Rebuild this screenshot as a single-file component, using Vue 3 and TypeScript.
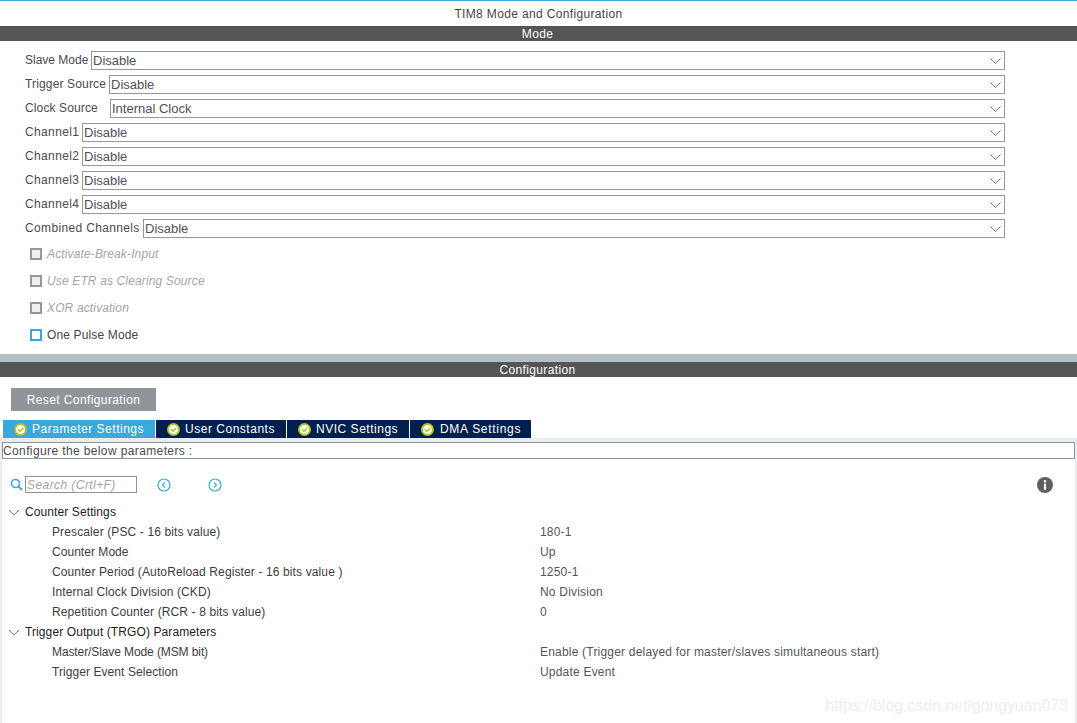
<script setup lang="ts">
const modeSelects = [
  { label: 'Slave Mode', value: 'Disable', left: 91, spacing: 0 },
  { label: 'Trigger Source', value: 'Disable', left: 109, spacing: 0.15 },
  { label: 'Clock Source', value: 'Internal Clock', left: 110, spacing: 0.13 },
  { label: 'Channel1', value: 'Disable', left: 82, spacing: 0.37 },
  { label: 'Channel2', value: 'Disable', left: 82, spacing: 0.37 },
  { label: 'Channel3', value: 'Disable', left: 82, spacing: 0.37 },
  { label: 'Channel4', value: 'Disable', left: 82, spacing: 0.37 },
  { label: 'Combined Channels', value: 'Disable', left: 143, spacing: 0.35 },
]
const checks = [
  { label: 'Activate-Break-Input', off: true },
  { label: 'Use ETR as Clearing Source', off: true },
  { label: 'XOR activation', off: true },
  { label: 'One Pulse Mode', off: false },
]
const tabs = [
  { label: 'Parameter Settings', width: 152, active: true },
  { label: 'User Constants', width: 130, active: false },
  { label: 'NVIC Settings', width: 122, active: false },
  { label: 'DMA Settings', width: 121, active: false },
]
const groups = [
  {
    title: 'Counter Settings',
    rows: [
      { name: 'Prescaler (PSC - 16 bits value)', value: '180-1', spacing: 0.12 },
      { name: 'Counter Mode', value: 'Up', spacing: 0.04 },
      { name: 'Counter Period (AutoReload Register - 16 bits value )', value: '1250-1', spacing: 0.12 },
      { name: 'Internal Clock Division (CKD)', value: 'No Division', spacing: 0.12 },
      { name: 'Repetition Counter (RCR - 8 bits value)', value: '0', spacing: 0.12 },
    ],
  },
  {
    title: 'Trigger Output (TRGO) Parameters',
    rows: [
      { name: 'Master/Slave Mode (MSM bit)', value: 'Enable (Trigger delayed for master/slaves simultaneous start)', spacing: -0.1 },
      { name: 'Trigger Event Selection', value: 'Update Event', spacing: 0.07 },
    ],
  },
]
</script>

<template>
  <div class="page">
    <div class="title">TIM8 Mode and Configuration</div>
    <div class="bar">Mode</div>
    <section class="mode">
      <div v-for="s in modeSelects" :key="s.label" class="select-row">
        <span
          class="select-label"
          :style="{ width: s.left - 25 + 'px', letterSpacing: s.spacing + 'px' }"
        >{{ s.label }}</span>
        <div class="select">
          <span>{{ s.value }}</span>
          <svg class="chev" width="11" height="6" viewBox="0 0 11 6">
            <path d="M0.5 0.5l5 5 5-5" fill="none" stroke="#777" stroke-width="1" />
          </svg>
        </div>
      </div>
      <div class="checks">
        <label v-for="c in checks" :key="c.label" class="check" :class="{ off: c.off }">
          <span class="box"></span>{{ c.label }}
        </label>
      </div>
    </section>
    <div class="divider"></div>
    <div class="bar">Configuration</div>
    <section class="config">
      <button class="reset" type="button">Reset Configuration</button>
      <div class="tabs">
        <div
          v-for="t in tabs"
          :key="t.label"
          class="tab"
          :class="{ active: t.active }"
          :style="{ width: t.width + 'px' }"
        >
          <svg width="13" height="13" viewBox="0 0 13 13">
            <circle cx="6.5" cy="6.5" r="5.5" fill="#fff" stroke="#b3c51d" stroke-width="2" />
            <path d="M3.8 6.3l2 2 3.4-3.2" fill="none" stroke="#b3c51d" stroke-width="1.5" />
          </svg>
          <span>{{ t.label }}</span>
        </div>
      </div>
      <div class="panel">
        <div class="desc">Configure the below parameters :</div>
        <div class="toolbar">
          <svg class="glass" width="13" height="13" viewBox="0 0 13 13">
            <circle cx="5.5" cy="5.5" r="4" fill="none" stroke="#39a9db" stroke-width="1.6" />
            <path d="M8.5 8.5l3.5 3.5" stroke="#39a9db" stroke-width="1.8" />
          </svg>
          <div class="search">Search (Crtl+F)</div>
          <svg class="nav prev" width="14" height="14" viewBox="0 0 14 14">
            <circle cx="7" cy="7" r="6" fill="none" stroke="#39a9db" stroke-width="1.2" />
            <path d="M8 4.5L5.5 7 8 9.5" fill="none" stroke="#39a9db" stroke-width="1.2" />
          </svg>
          <svg class="nav next" width="14" height="14" viewBox="0 0 14 14">
            <circle cx="7" cy="7" r="6" fill="none" stroke="#39a9db" stroke-width="1.2" />
            <path d="M6 4.5L8.5 7 6 9.5" fill="none" stroke="#39a9db" stroke-width="1.2" />
          </svg>
          <svg class="info" width="16" height="16" viewBox="0 0 16 16">
            <circle cx="8" cy="8" r="8" fill="#5f5f5f" />
            <circle cx="8" cy="4.2" r="1.2" fill="#fff" />
            <rect x="6.9" y="6.5" width="2.2" height="6.2" fill="#fff" />
          </svg>
        </div>
        <div class="groups">
          <div v-for="g in groups" :key="g.title" class="group">
            <div class="group-title">
              <svg width="12" height="7" viewBox="0 0 12 7">
                <path d="M1 1l5 5 5-5" fill="none" stroke="#777" stroke-width="1" />
              </svg>
              <span>{{ g.title }}</span>
            </div>
            <div v-for="r in g.rows" :key="r.name" class="row">
              <span class="row-name" :style="{ letterSpacing: r.spacing + 'px' }">{{ r.name }}</span>
              <span class="row-value">{{ r.value }}</span>
            </div>
          </div>
        </div>
        <div class="watermark">https://blog.csdn.net/gongyuan073</div>
      </div>
    </section>
  </div>
</template>

<style>
html, body { margin: 0; background: #fff; }
</style>

<style scoped>
.page {
  width: 1077px;
  height: 723px;
  overflow: hidden;
  position: relative;
  background: #fff;
  border-top: 1px solid #39a9db;
  box-sizing: border-box;
  font-family: "Liberation Sans", Arial, sans-serif;
  font-size: 12px;
  color: #4a4a50;
}
.title {
  height: 25px;
  line-height: 26px;
  text-align: center;
  color: #444;
  letter-spacing: 0.35px;
}
.bar {
  height: 15px;
  line-height: 16px;
  padding-right: 2px;
  background: #545554;
  color: #fff;
  text-align: center;
  letter-spacing: 0.35px;
}
.mode {
  height: 313px;
  padding: 10px 0 0 25px;
  box-sizing: border-box;
}
.select-row {
  display: flex;
  align-items: center;
  height: 19px;
  margin-bottom: 5px;
  width: 980px;
}
.select-label {
  flex: none;
  position: relative;
  top: -1px;
  white-space: nowrap;
}
.select {
  flex: 1;
  height: 19px;
  box-sizing: border-box;
  border: 1px solid #979797;
  display: flex;
  align-items: center;
  justify-content: space-between;
  padding: 0 3px 0 1px;
  font-size: 13px;
  color: #50505a;
}
.checks {
  margin-top: -3px;
  padding-left: 5px;
}
.check {
  display: flex;
  align-items: center;
  height: 27px;
  gap: 5px;
  letter-spacing: 0.14px;
  color: #444;
}
.check.off {
  color: #a4a4a8;
  font-style: italic;
}
.box {
  width: 12px;
  height: 12px;
  box-sizing: border-box;
  border: 2px solid #39a9db;
  background: #fff;
}
.off .box {
  border-color: #94989c;
  background: #edeff1;
}
.divider {
  height: 8px;
  background: #b5c1c6;
}
.config {
  height: 346px;
  padding-top: 11px;
  box-sizing: border-box;
}
.reset {
  display: block;
  margin: 0 0 9px 11px;
  width: 145px;
  height: 23px;
  border: 0;
  padding: 0;
  background: #919599;
  color: #fff;
  font: 12px "Liberation Sans", Arial, sans-serif;
  letter-spacing: 0.4px;
}
.tabs {
  display: flex;
  gap: 1px;
  padding-left: 3px;
  height: 18px;
}
.tab {
  display: flex;
  align-items: center;
  padding-left: 11px;
  gap: 5px;
  box-sizing: border-box;
  background: #02204f;
  color: #fff;
  letter-spacing: 0.52px;
}
.tab:last-child {
  gap: 6px;
  letter-spacing: 0.7px;
}
.tab.active {
  background: #39a9db;
}
.panel {
  position: relative;
  height: 285px;
  border-top: 4px solid #e8ecef;
  border-left: 2px solid #e8ecef;
  border-right: 2px solid #e8ecef;
}
.desc {
  height: 17px;
  line-height: 16px;
  box-sizing: border-box;
  border: 1px solid #8c939a;
  letter-spacing: 0.38px;
  color: #4a4a50;
}
.toolbar {
  position: relative;
  display: flex;
  align-items: center;
  height: 17px;
  margin-top: 17px;
  padding-left: 8px;
}
.glass {
  flex: none;
}
.search {
  margin-left: 2px;
  width: 112px;
  height: 17px;
  line-height: 16px;
  box-sizing: border-box;
  border: 1px solid #8c939a;
  padding-left: 1px;
  font-style: italic;
  letter-spacing: 0.43px;
  color: #a4a4a8;
}
.nav {
  flex: none;
}
.prev {
  margin-left: 20px;
}
.next {
  margin-left: 37px;
}
.info {
  margin-left: auto;
  margin-right: 22px;
}
.groups {
  margin-top: 9px;
}
.group-title {
  display: flex;
  align-items: center;
  gap: 5px;
  height: 20px;
  padding-left: 6px;
  letter-spacing: 0.1px;
  color: #222;
}
.row {
  display: flex;
  height: 20px;
  line-height: 20px;
  padding-left: 50px;
  color: #3c3c40;
}
.row-name {
  width: 488px;
  flex: none;
}
.row-value {
  color: #55555c;
  letter-spacing: 0.2px;
}
.watermark {
  position: absolute;
  right: 7px;
  bottom: 12px;
  font-size: 16px;
  letter-spacing: -0.06px;
  color: #eceef0;
}
</style>
